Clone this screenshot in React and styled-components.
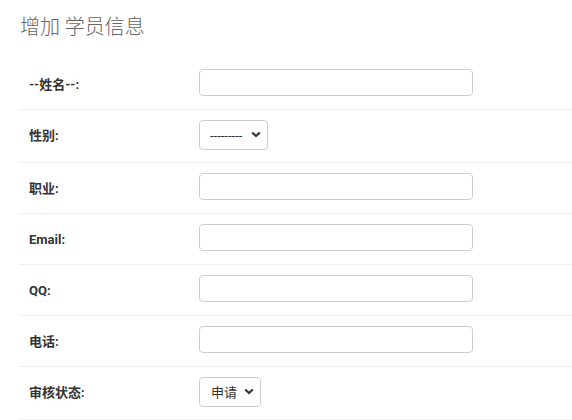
import React from "react";
import styled, { createGlobalStyle } from "styled-components";

const Global = createGlobalStyle`
  html, body { margin: 0; padding: 0; background: #fff; }
  body {
    font-family: Roboto, "Noto Sans CJK SC", "Liberation Sans", sans-serif;
    color: #333;
    font-size: 14px;
  }
`;

const Content = styled.div`
  padding: 15px 0 0 19px;
`;

const Title = styled.h1`
  margin: 0 0 20px;
  font-size: 20px;
  line-height: 24px;
  font-weight: 300;
  color: #666;
  padding-left: 1px;
`;

const Fieldset = styled.div`
  display: flex;
  flex-direction: column;
`;

const Row = styled.div`
  display: flex;
  align-items: flex-start;
  padding: 10px 0 10px 10px;
  border-bottom: 1px solid #eee;
  min-height: ${(p) => p.$h}px;
`;

const Label = styled.label`
  width: 170px;
  flex: none;
  padding-top: 8px;
  font-size: 13px;
  line-height: 16px;
  font-weight: 700;
  color: #333;
`;

const TextInput = styled.input`
  box-sizing: border-box;
  width: 274px;
  height: 27px;
  margin: 0;
  padding: 5px 6px;
  border: 1px solid #ccc;
  border-radius: 4px;
  font-family: inherit;
  font-size: 13px;
  background: #fff;
  outline: none;
`;

const SelectWrap = styled.div`
  position: relative;
  display: inline-flex;
`;

const Select = styled.select`
  box-sizing: border-box;
  appearance: none;
  -webkit-appearance: none;
  width: ${(p) => p.$w}px;
  height: 30px;
  margin: 0;
  padding: 0 0 0 ${(p) => p.$pl}px;
  border: 1px solid #ccc;
  border-radius: 4px;
  font-family: inherit;
  font-size: 13px;
  color: #333;
  background: #fff;
  outline: none;
`;

const Chevron = styled.svg`
  position: absolute;
  right: 7px;
  top: 11px;
  width: 10px;
  height: 7px;
  pointer-events: none;
`;

function ChevronIcon() {
  return (
    <Chevron viewBox="0 0 10 7">
      <path d="M1.2 1.4 L5 5 L8.8 1.4" fill="none" stroke="#333" strokeWidth="2.1" />
    </Chevron>
  );
}

function SelectField({ w, pl, options }) {
  return (
    <SelectWrap>
      <Select $w={w} $pl={pl}>
        {options.map((o) => (
          <option key={o}>{o}</option>
        ))}
      </Select>
      <ChevronIcon />
    </SelectWrap>
  );
}

const rows = [
  { label: "--姓名--:", kind: "text" },
  { label: "性别:", kind: "select", w: 69, pl: 10, options: ["---------", "男", "女"] },
  { label: "职业:", kind: "text" },
  { label: "Email:", kind: "text" },
  { label: "QQ:", kind: "text" },
  { label: "电话:", kind: "text" },
  { label: "审核状态:", kind: "select", w: 62, pl: 11, options: ["申请", "通过", "拒绝"] },
];

export default function App() {
  return (
    <>
      <Global />
      <Content>
        <Title>增加 学员信息</Title>
        <Fieldset>
          {rows.map((r) => (
            <Row key={r.label} $h={r.kind === "select" ? 32 : 30}>
              <Label>{r.label}</Label>
              {r.kind === "text" ? (
                <TextInput type="text" />
              ) : (
                <SelectField w={r.w} pl={r.pl} options={r.options} />
              )}
            </Row>
          ))}
        </Fieldset>
      </Content>
    </>
  );
}
